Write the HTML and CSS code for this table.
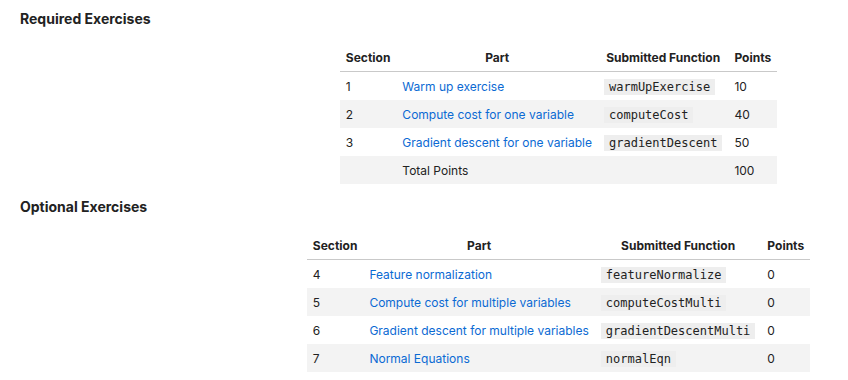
FILE: index.html
```html
<!DOCTYPE html>
<html>
<head>
<meta charset="utf-8">
<link rel="stylesheet" href="styles.css">
</head>
<body>
<div class="page">
  <h3 class="title">Required Exercises</h3>
  <div class="tbl">
  <table class="ex">
    <thead>
      <tr><th>Section</th><th>Part</th><th>Submitted Function</th><th>Points</th></tr>
    </thead>
    <tbody>
      <tr><td>1</td><td><a href="#">Warm up exercise</a></td><td><code>warmUpExercise</code></td><td>10</td></tr>
      <tr><td>2</td><td><a href="#">Compute cost for one variable</a></td><td><code>computeCost</code></td><td>40</td></tr>
      <tr><td>3</td><td><a href="#">Gradient descent for one variable</a></td><td><code>gradientDescent</code></td><td>50</td></tr>
      <tr><td></td><td>Total Points</td><td></td><td>100</td></tr>
    </tbody>
  </table>
  </div>
  <h3 class="title">Optional Exercises</h3>
  <div class="tbl">
  <table class="ex">
    <thead>
      <tr><th>Section</th><th>Part</th><th>Submitted Function</th><th>Points</th></tr>
    </thead>
    <tbody>
      <tr><td>4</td><td><a href="#">Feature normalization</a></td><td><code>featureNormalize</code></td><td>0</td></tr>
      <tr><td>5</td><td><a href="#">Compute cost for multiple variables</a></td><td><code>computeCostMulti</code></td><td>0</td></tr>
      <tr><td>6</td><td><a href="#">Gradient descent for multiple variables</a></td><td><code>gradientDescentMulti</code></td><td>0</td></tr>
      <tr><td>7</td><td><a href="#">Normal Equations</a></td><td><code>normalEqn</code></td><td>0</td></tr>
    </tbody>
  </table>
  </div>
</div>
</body>
</html>
```
FILE: styles.css
```css
html, body {
  margin: 0;
  padding: 0;
  background: #fff;
}
body {
  font-family: "Inter", "Noto Sans", sans-serif;
  font-size: 12px;
  color: #222;
}
.page {
  padding: 9px 0 0 20px;
}
.title {
  margin: 0;
  font-size: 14px;
  line-height: 20px;
  font-weight: 700;
  color: #222;
}
.tbl {
  padding-left: 249px;
}
.ex {
  border-collapse: collapse;
  margin: 14px auto 13px;
}
.ex th {
  height: 28px;
  padding: 0 6px;
  font-size: 12px;
  font-weight: 700;
  text-align: center;
  border-bottom: 1px solid #c9c9c9;
}
.ex td {
  height: 28px;
  padding: 0 6px;
  text-align: left;
  vertical-align: middle;
}
.ex tbody tr:nth-child(even) {
  background: #f3f3f3;
}
.ex a {
  color: #0b6ad3;
  text-decoration: none;
}
.ex code {
  font-family: "DejaVu Sans Mono", monospace;
  font-size: 12px;
  background: #eeeeee;
  padding: 1px 5px;
}
```
